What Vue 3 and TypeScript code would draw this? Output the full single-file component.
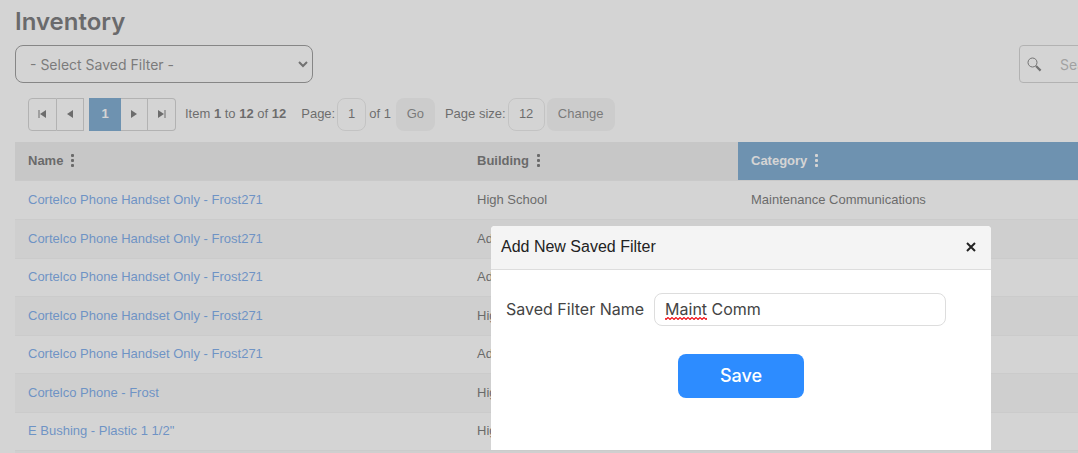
<script setup lang="ts">
import { ref } from 'vue'

interface Item {
  name: string
  building: string
  category: string
}

const items: Item[] = [
  { name: 'Cortelco Phone Handset Only - Frost271', building: 'High School', category: 'Maintenance Communications' },
  { name: 'Cortelco Phone Handset Only - Frost271', building: 'Ad', category: '' },
  { name: 'Cortelco Phone Handset Only - Frost271', building: 'Ad', category: '' },
  { name: 'Cortelco Phone Handset Only - Frost271', building: 'Hig', category: '' },
  { name: 'Cortelco Phone Handset Only - Frost271', building: 'Ad', category: '' },
  { name: 'Cortelco Phone - Frost', building: 'Hig', category: '' },
  { name: 'E Bushing - Plastic 1 1/2"', building: 'Hig', category: '' },
  { name: '', building: '', category: '' },
]

const columns = ['Name', 'Building', 'Category']
const filterName = ref('Maint Comm')
const page = ref('1')
const pageSize = ref('12')
const search = ref('')
const dialogOpen = ref(true)
</script>

<template>
  <div class="app">
    <main class="page">
      <h1>Inventory</h1>
      <div class="toolbar">
        <div class="select-wrap">
          <select aria-label="Saved filter">
            <option>- Select Saved Filter -</option>
          </select>
          <svg class="chevron" viewBox="0 0 10 7" width="10" height="7" aria-hidden="true">
            <path d="M1 1l4 4 4-4" fill="none" stroke="currentColor" stroke-width="2" />
          </svg>
        </div>
        <label class="search">
          <svg viewBox="0 0 15 15" width="15" height="15" aria-hidden="true">
            <circle cx="5.5" cy="5.5" r="4.5" fill="none" stroke="currentColor" stroke-width="1" />
            <path d="M9 9l4.600 4.600" stroke="currentColor" stroke-width="2.200" />
          </svg>
          <input v-model="search" type="text" placeholder="Search" aria-label="Search" />
        </label>
      </div>

      <nav class="pager" aria-label="Pages">
        <div class="group">
          <button class="step first" type="button" aria-label="First page">
            <svg viewBox="0 0 9 9" width="9" height="9"><path d="M1 1v8" stroke="currentColor" /><path d="M8 1v8L2 5z" fill="currentColor" /></svg>
          </button>
          <button class="step" type="button" aria-label="Previous page">
            <svg viewBox="0 0 9 9" width="9" height="9"><path d="M7 1v8L1 5z" fill="currentColor" /></svg>
          </button>
        </div>
        <div class="group second">
          <button class="current" type="button" aria-current="page">1</button>
          <button class="step" type="button" aria-label="Next page">
            <svg viewBox="0 0 9 9" width="9" height="9"><path d="M1 1v8l6-4z" fill="currentColor" /></svg>
          </button>
          <button class="step last" type="button" aria-label="Last page">
            <svg viewBox="0 0 9 9" width="9" height="9"><path d="M8 1v8" stroke="currentColor" /><path d="M1 1v8l6-4z" fill="currentColor" /></svg>
          </button>
        </div>
        <span class="summary">Item <b>1</b> to <b>12</b> of <b>12</b></span>
        <label class="field"><span>Page:</span><input v-model="page" class="page-input" type="text" /></label>
        <span class="of">of 1</span>
        <button class="soft go" type="button">Go</button>
        <label class="field"><span>Page size:</span><input v-model="pageSize" class="size-input" type="text" /></label>
        <button class="soft change" type="button">Change</button>
      </nav>

      <table>
        <colgroup>
          <col class="col-name" />
          <col class="col-building" />
          <col />
        </colgroup>
        <thead>
          <tr>
            <th v-for="c in columns" :key="c" :class="{ sorted: c === 'Category' }" scope="col">
              <span class="th-inner">
                <span class="th-text">{{ c }}</span>
                <svg viewBox="0 0 4 14" width="4" height="14" aria-hidden="true" fill="currentColor">
                  <rect x="0" y="0" width="3" height="3" rx="1" />
                  <rect x="0" y="5" width="3" height="3" rx="1" />
                  <rect x="0" y="10" width="3" height="3" rx="1" />
                </svg>
              </span>
            </th>
          </tr>
        </thead>
        <tbody>
          <tr v-for="(item, i) in items" :key="i">
            <td><a v-if="item.name" href="#">{{ item.name }}</a></td>
            <td>{{ item.building }}</td>
            <td>{{ item.category }}</td>
          </tr>
        </tbody>
      </table>
    </main>

    <div v-if="dialogOpen" class="overlay"></div>
    <section v-if="dialogOpen" class="dialog" role="dialog" aria-labelledby="dialog-title">
      <header>
        <h2 id="dialog-title">Add New Saved Filter</h2>
        <button class="close" type="button" aria-label="Close" @click="dialogOpen = false">
          <svg viewBox="0 0 10 10" width="10" height="10"><path d="M1 1l8 8M9 1L1 9" stroke="currentColor" stroke-width="2" /></svg>
        </button>
      </header>
      <form @submit.prevent>
        <div class="form-row">
          <label for="filter-name">Saved Filter Name</label>
          <div class="name-wrap">
            <input id="filter-name" v-model="filterName" type="text" spellcheck="false" />
            <svg class="squiggle" width="42" height="3" aria-hidden="true">
              <defs>
                <pattern id="wave" width="4" height="3" patternUnits="userSpaceOnUse">
                  <path d="M-1 0.500L1 2.500 3 0.500 5 2.500" fill="none" stroke="#f01018" stroke-width="1.200" />
                </pattern>
              </defs>
              <rect width="42" height="3" fill="url(#wave)" />
            </svg>
          </div>
        </div>
        <button class="save" type="submit">Save</button>
      </form>
    </section>
  </div>
</template>

<style>
body {
  background: #fff;
}
</style>

<style scoped>
* {
  box-sizing: border-box;
}
.app {
  position: relative;
  height: 100vh;
  overflow: hidden;
  font-family: 'Liberation Sans', Arial, sans-serif;
  font-size: 13px;
  color: #2a2a2a;
}
button,
input,
select {
  font: inherit;
  color: inherit;
  margin: 0;
}
.page {
  min-width: 1275px;
  padding: 6px 15px 0;
}
h1 {
  margin: 0;
  font: 600 24px/32px Inter, sans-serif;
  color: #2a2a2e;
}
.toolbar {
  display: flex;
  justify-content: space-between;
  margin-top: 7px;
}
.select-wrap {
  position: relative;
  width: 298px;
}
select {
  appearance: none;
  width: 100%;
  height: 38px;
  padding: 0 14px;
  border: 1px solid #626262;
  border-radius: 8px;
  background: #fff;
  font: 14px Inter, sans-serif;
  color: #4c4c4c;
}
.chevron {
  position: absolute;
  right: 5px;
  top: 16px;
  color: #3a3a3a;
  pointer-events: none;
}
.search {
  display: flex;
  align-items: center;
  width: 241px;
  height: 38px;
  padding-left: 7px;
  border: 1px solid #bbb;
  border-radius: 4px;
  color: #3a3a3a;
}
.search input {
  flex: 1;
  min-width: 0;
  padding: 0 0 0 18px;
  border: 0;
  outline: 0;
  background: none;
  font: 14px Inter, sans-serif;
}
.search input::placeholder {
  color: #999;
}
.pager {
  display: flex;
  align-items: center;
  padding: 15px 13px 11px;
  color: #2f2f2f;
}
.group {
  display: flex;
  height: 33px;
}
.second {
  margin-left: 5px;
}
.step {
  display: flex;
  align-items: center;
  justify-content: center;
  width: 27px;
  padding: 0 0 2px;
  border: 1px solid #bbb;
  border-left: 0;
  background: #fff;
}
.first {
  width: 29px;
  border-left: 1px solid #bbb;
  border-radius: 4px 0 0 4px;
}
.last {
  width: 28px;
  border-radius: 0 4px 4px 0;
}
.current {
  width: 32px;
  padding: 0 0 2px;
  border: 0;
  background: #337ab7;
  color: #fff;
  font-weight: 700;
}
.summary {
  margin: 0 15px 0 9px;
  padding-bottom: 2px;
}
.field {
  display: flex;
  align-items: center;
  gap: 2px;
}
.field span,
.of {
  padding-bottom: 2px;
}
.field input {
  height: 33px;
  padding: 0 0 2px;
  border: 1px solid #ddd;
  border-radius: 8px;
  background: #fff;
  text-align: center;
}
.page-input {
  width: 29px;
}
.size-input {
  width: 37px;
}
.of {
  margin: 0 5px 0 3px;
}
.soft {
  height: 33px;
  padding: 0 0 2px;
  border: 0;
  border-radius: 8px;
  background: #efefef;
  color: #4a4a4a;
}
.go {
  width: 39px;
  margin-right: 10px;
}
.change {
  width: 68px;
  margin-left: 2px;
}
table {
  width: 100%;
  border-collapse: separate;
  border-spacing: 0;
  table-layout: fixed;
}
.col-name {
  width: 449px;
}
.col-building {
  width: 274px;
}
th {
  height: 39px;
  padding: 0 13px;
  border-bottom: 1px solid #e8e8e8;
  background: #e4e4e4;
  text-align: left;
}
th.sorted {
  background: #337ab7;
  color: #fff;
}
.th-inner {
  display: flex;
  align-items: center;
  gap: 8px;
}
.th-text {
  padding-bottom: 2px;
}
td {
  height: 38px;
  padding: 0 13px 2px;
  border-top: 1px solid #ececec;
}
tr:first-child td {
  border-top-color: #fff;
}
tr:nth-child(even) td {
  height: 39px;
  background: #f4f4f4;
}
a {
  color: #337de0;
  text-decoration: none;
}
.overlay {
  position: absolute;
  inset: 0;
  background: #aaa;
  opacity: 0.5;
}
.dialog {
  position: absolute;
  left: 491px;
  top: 226px;
  width: 500px;
  min-height: 224px;
  border-radius: 4px 4px 0 0;
  background: #fff;
  overflow: hidden;
}
.dialog header {
  display: flex;
  align-items: center;
  justify-content: space-between;
  height: 44px;
  padding: 0 15px 1px 10px;
  border-bottom: 1px solid #ddd;
  background: #f4f4f4;
}
h2 {
  margin: 0;
  font-size: 16px;
  font-weight: 400;
  color: #222;
}
.close {
  display: flex;
  padding: 0;
  border: 0;
  background: none;
  color: #222;
}
form {
  display: flex;
  flex-direction: column;
  align-items: center;
  padding: 23px 45px 0 15px;
  font: 16px Inter, sans-serif;
  color: #444;
}
.form-row {
  display: flex;
  align-items: center;
  gap: 10px;
  width: 100%;
}
.form-row label {
  padding-bottom: 2px;
}
.name-wrap {
  position: relative;
  flex: 1;
}
.name-wrap input {
  display: block;
  width: 100%;
  height: 33px;
  padding: 0 10px 2px;
  border: 1px solid #ddd;
  border-radius: 8px;
  background: #fff;
}
.squiggle {
  position: absolute;
  left: 11px;
  top: 24px;
}
.save {
  width: 126px;
  height: 44px;
  margin: 28px 0 0 30px;
  padding: 0 0 2px;
  border: 0;
  border-radius: 8px;
  background: #2d8cff;
  color: #fff;
  font-size: 18px;
  font-weight: 500;
}
</style>
